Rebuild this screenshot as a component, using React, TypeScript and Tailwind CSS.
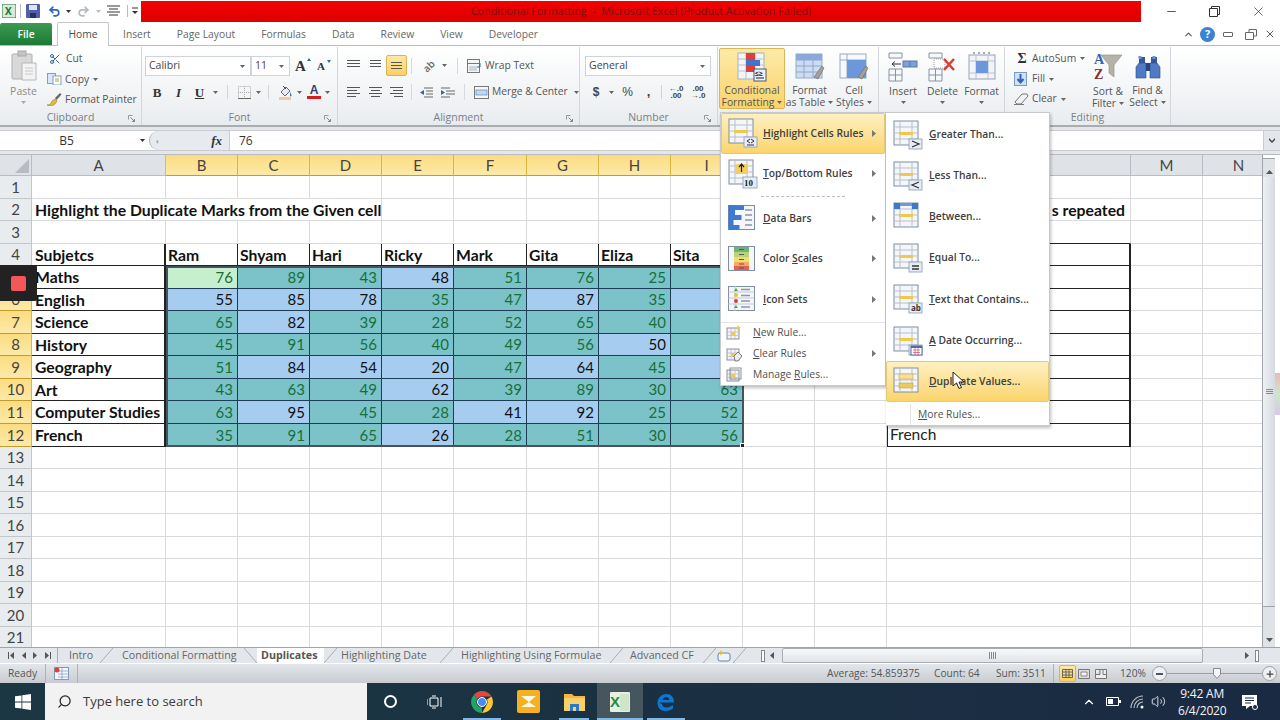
import { ReactNode } from "react"
import { Scissors, Undo2, Redo2, ChevronUp, Volume2, Search, Minus, Plus, X } from "lucide-react"

const uiFont = "font-['Open_Sans',sans-serif]"
const cellFont = "font-['Lato',sans-serif]"

const columns = ["A", "B", "C", "D", "E", "F", "G", "H", "I", "", "", "", "M", "N"]
const names = ["Ram", "Shyam", "Hari", "Ricky", "Mark", "Gita", "Eliza", "Sita"]

// t = duplicate (teal), b = unique (blue), g = active cell
const marks: { subject: string; values: (number | null)[]; fills: string }[] = [
  { subject: "Maths", values: [76, 89, 43, 48, 51, 76, 25, null], fills: "gttbtttt" },
  { subject: "English", values: [55, 85, 78, 35, 47, 87, 35, null], fills: "bbbttbtb" },
  { subject: "Science", values: [65, 82, 39, 28, 52, 65, 40, null], fills: "tbtttttt" },
  { subject: "History", values: [45, 91, 56, 40, 49, 56, 50, null], fills: "ttttttbt" },
  { subject: "Geography", values: [51, 84, 54, 20, 47, 64, 45, null], fills: "tbbbtbtb" },
  { subject: "Art", values: [43, 63, 49, 62, 39, 89, 30, 63], fills: "tttbtttt" },
  { subject: "Computer Studies", values: [63, 95, 45, 28, 41, 92, 25, 52], fills: "tbttbbtt" },
  { subject: "French", values: [35, 91, 65, 26, 28, 51, 30, 56], fills: "tttbtttt" },
]

function Caret({ color = "#666" }: { color?: string }) {
  return (
    <svg width="5" height="3" viewBox="0 0 5 3" className="shrink-0">
      <path d="M0 0h5L2.500 3z" fill={color} />
    </svg>
  )
}

function Launcher() {
  return (
    <svg width="7" height="7" viewBox="0 0 7 7" className="absolute right-[6px] top-[5px]">
      <path d="M.5.5h4M.5.5v4" stroke="#999" fill="none" />
      <path d="M2.500 2.500l4 4M6.500 4v2.500H4" stroke="#888" fill="none" />
    </svg>
  )
}

function Lines({ widths, active }: { widths: number[]; active?: "left" | "center" | "right" }) {
  const a = active ?? "left"
  return (
    <svg width="13" height="11" viewBox="0 0 13 11">
      {widths.map((w, i) => (
        <rect key={i} x={a === "left" ? 0 : a === "center" ? (13 - w) / 2 : 13 - w} y={i * 3} width={w} height="1" fill="#555" />
      ))}
    </svg>
  )
}

function Group({ label, width, launcher, children }: { label: string; width: string; launcher?: boolean; children: ReactNode }) {
  return (
    <div className={`${width} h-full flex flex-col border-r border-[#d3d6da] shrink-0`}>
      <div className="flex-1 flex min-h-0">{children}</div>
      <div className="relative h-[15px] text-center text-[10.5px] leading-[15px] text-[#7a7f85]">
        {label}
        {launcher && <Launcher />}
      </div>
    </div>
  )
}

function GridBase({ fill = "#f4f6f9" }: { fill?: string }) {
  return (
    <>
      <rect x="1" y="1" width="24" height="24" fill={fill} stroke="#7f8da0" strokeWidth="1" />
      <path d="M1 7h24M1 13h24M1 19h24M7 1v24M19 1v24" stroke="#b6c1cf" strokeWidth="1" />
    </>
  )
}

function Badge({ children }: { children: ReactNode }) {
  return (
    <>
      <rect x="16" y="19" width="13" height="10" fill="#e6edf7" stroke="#8a99ad" strokeWidth=".8" />
      {children}
    </>
  )
}

function RuleIcon({ kind }: { kind: string }) {
  return (
    <svg width="30" height="30" viewBox="0 0 30 30" className="shrink-0">
      <GridBase />
      {kind === "between" && <path d="M1 1h6v6H1zM19 1h6v6h-6z" fill="#3f78c8" />}
      {kind === "between" && <rect x="7" y="1" width="12" height="3" fill="#6f9ad8" />}
      {kind === "dup" ? (
        <>
          <rect x="6" y="7" width="14" height="5" fill="#f7e09a" stroke="#b99b3d" strokeWidth=".5" />
          <rect x="6" y="16" width="14" height="5" fill="#eeca5d" stroke="#b99b3d" strokeWidth=".5" />
        </>
      ) : (
        <rect x="6" y="12" width="14" height="3" fill="#efc94f" />
      )}
      {kind === "gt" && <Badge><path d="M19 21l7 3-7 3" fill="none" stroke="#333" strokeWidth="1.300" /></Badge>}
      {kind === "lt" && <Badge><path d="M26 21l-7 3 7 3" fill="none" stroke="#333" strokeWidth="1.300" /></Badge>}
      {kind === "eq" && <Badge><path d="M19 23h7M19 26h7" stroke="#333" strokeWidth="1.300" /></Badge>}
      {kind === "ab" && <Badge><text x="18" y="27" fontSize="8" fontWeight="700" fill="#333">ab</text></Badge>}
      {kind === "date" && (
        <Badge>
          <rect x="18" y="20" width="11" height="9" fill="#fff" stroke="#4a6fa8" />
          <rect x="18" y="20" width="11" height="2" fill="#4a6fa8" />
          <path d="M20 24h7M20 26.500h7M22 22v7M25 22v7" stroke="#c35" strokeWidth=".6" />
        </Badge>
      )}
      {kind === "hl" && <Badge><path d="M22 21l-3 2 3 2M23 21l3 2-3 2M19 27h7" fill="none" stroke="#333" /></Badge>}
    </svg>
  )
}

function TopBottomIcon() {
  return (
    <svg width="30" height="30" viewBox="0 0 30 30" className="shrink-0">
      <GridBase />
      <rect x="7" y="5" width="13" height="10" fill="#f0d060" />
      <path d="M13.500 13V5M11 8l2.500-3 2.500 3" stroke="#222" strokeWidth="1.200" fill="none" />
      <rect x="15" y="18" width="14" height="11" fill="#e6edf7" stroke="#8a99ad" strokeWidth=".8" />
      <text x="16" y="27" fontSize="9" fontWeight="700" fontFamily="Liberation Serif" fill="#222">10</text>
    </svg>
  )
}

function DataBarsIcon() {
  return (
    <svg width="28" height="26" viewBox="0 0 28 26" className="shrink-0">
      <rect x=".5" y=".5" width="26" height="24" fill="#f4f6f9" stroke="#7f8da0" />
      <path d="M.5 0v25h11v-5h-6v-5h8v-5H7V5h9V.5z" fill="#3f78d0" />
      <path d="M17 5h7M17 10h7M17 15h7M17 20h7" stroke="#8a97a8" strokeWidth="1.500" />
    </svg>
  )
}

function ColorScalesIcon() {
  return (
    <svg width="28" height="26" viewBox="0 0 28 26" className="shrink-0">
      <rect x=".5" y=".5" width="26" height="24" fill="#f4f6f9" stroke="#7f8da0" />
      <rect x="6" y="1" width="15" height="5" fill="#6fb46f" />
      <rect x="6" y="6" width="15" height="5" fill="#bcd27a" />
      <rect x="6" y="11" width="15" height="5" fill="#f3dc6e" />
      <rect x="6" y="16" width="15" height="4" fill="#f2ab62" />
      <rect x="6" y="20" width="15" height="4" fill="#e85f50" />
      <path d="M11 3.500h5M11 8.500h5M11 13.500h5M11 18h5M11 22h5" stroke="#556" />
    </svg>
  )
}

function IconSetsIcon() {
  return (
    <svg width="28" height="26" viewBox="0 0 28 26" className="shrink-0">
      <rect x=".5" y=".5" width="26" height="24" fill="#f4f6f9" stroke="#7f8da0" />
      <path d="M.5 6h26M.5 12h26M.5 18h26M7 0v25" stroke="#c3ccd8" />
      <path d="M8 2l2 3H6zM8 19l2 3H6z" fill="#4ca64c" />
      <circle cx="8" cy="9" r="2" fill="#e6c030" />
      <circle cx="8" cy="15" r="2" fill="#d84040" />
      <path d="M13 3.500h9M13 9.500h9M13 15h9M13 21h9" stroke="#8a97a8" strokeWidth="1.500" />
    </svg>
  )
}

function SmallTable({ extra }: { extra: string }) {
  return (
    <svg width="16" height="16" viewBox="0 0 16 16" className="shrink-0">
      <rect x="1" y="3" width="12" height="11" fill="#f1f3f6" stroke="#8a8f98" />
      <path d="M1 7h12M1 10.500h12M5 3v11M9 3v11" stroke="#b4bac4" strokeWidth=".7" />
      <rect x="5" y="7" width="4" height="3.500" fill="#ecc95a" />
      {extra === "new" && <path d="M12 0l1 2 2 .5-2 1L12 6l-1-2.500L9 2.500l2-.5z" fill="#f4c93c" />}
      {extra === "clear" && <path d="M8 10l4-4 4 4-4 5H9z" fill="#e9edf2" stroke="#777" />}
      {extra === "manage" && <rect x="4" y="1" width="11" height="11" fill="none" stroke="#8a8f98" />}
    </svg>
  )
}

function MenuArrow() {
  return (
    <svg width="4" height="7" viewBox="0 0 4 7">
      <path d="M0 0l4 3.500L0 7z" fill="#777" />
    </svg>
  )
}

function MenuRow({ icon, children, arrow, active, sub }: { icon: ReactNode; children: ReactNode; arrow?: boolean; active?: boolean; sub?: boolean }) {
  return (
    <div className={`${sub ? "h-[41.2px]" : "h-[41px]"} flex items-center pl-[6px] pr-[8px] text-[10.3px] font-semibold text-[#404040] ${active ? "bg-linear-to-b from-[#fdf0c0] to-[#fbd56b] border border-[#e3c97c] rounded-[2px]" : "border border-transparent"}`}>
      <span className={`${sub ? "w-[36px]" : "w-[35px]"} shrink-0 flex items-center`}>{icon}</span>
      <span className="flex-1 whitespace-nowrap">{children}</span>
      {arrow && <MenuArrow />}
    </div>
  )
}

function SmallMenuRow({ icon, children, arrow }: { icon: ReactNode; children: ReactNode; arrow?: boolean }) {
  return (
    <div className="h-[21px] flex items-center pl-[5px] pr-[9px] text-[10.3px] text-[#505050]">
      <span className="w-[27px] shrink-0">{icon}</span>
      <span className="flex-1 whitespace-nowrap">{children}</span>
      {arrow && <MenuArrow />}
    </div>
  )
}

function CfMenu() {
  return (
    <div className={`absolute left-[720px] top-[112px] flex items-start z-20 ${uiFont}`}>
      <div className="w-[166px] h-[274px] bg-white border border-[#c6c9cd] shadow-[1px_2px_3px_rgba(0,0,0,.25)] flex flex-col">
        <MenuRow active arrow icon={<RuleIcon kind="hl" />}><u>H</u>ighlight Cells Rules</MenuRow>
        <MenuRow arrow icon={<TopBottomIcon />}><u>T</u>op/Bottom Rules</MenuRow>
        <div className="mx-[40px] my-[1.5px] border-t border-dashed border-[#bbb]" />
        <MenuRow arrow icon={<DataBarsIcon />}><u>D</u>ata Bars</MenuRow>
        <MenuRow arrow icon={<ColorScalesIcon />}>Color <u>S</u>cales</MenuRow>
        <MenuRow arrow icon={<IconSetsIcon />}><u>I</u>con Sets</MenuRow>
        <div className="h-[1px] mt-[2px] bg-[#e6e6e6]" />
        <SmallMenuRow icon={<SmallTable extra="new" />}><u>N</u>ew Rule...</SmallMenuRow>
        <SmallMenuRow arrow icon={<SmallTable extra="clear" />}><u>C</u>lear Rules</SmallMenuRow>
        <SmallMenuRow icon={<SmallTable extra="manage" />}>Manage <u>R</u>ules...</SmallMenuRow>
      </div>
      <div className="w-[164px] h-[314px] pt-[1px] bg-white border border-[#c6c9cd] border-l-0 shadow-[1px_2px_3px_rgba(0,0,0,.25)] flex flex-col">
        <MenuRow sub icon={<RuleIcon kind="gt" />}><u>G</u>reater Than...</MenuRow>
        <MenuRow sub icon={<RuleIcon kind="lt" />}><u>L</u>ess Than...</MenuRow>
        <MenuRow sub icon={<RuleIcon kind="between" />}><u>B</u>etween...</MenuRow>
        <MenuRow sub icon={<RuleIcon kind="eq" />}><u>E</u>qual To...</MenuRow>
        <MenuRow sub icon={<RuleIcon kind="ab" />}><u>T</u>ext that Contains...</MenuRow>
        <MenuRow sub icon={<RuleIcon kind="date" />}><u>A</u> Date Occurring...</MenuRow>
        <MenuRow sub active icon={<RuleIcon kind="dup" />}><u>D</u>uplicate Values...</MenuRow>
        <div className="flex-1 flex items-center pl-[24px] pt-[2px] text-[10.3px] text-[#505050]">
          <span className="border-l border-[#e4e4e4] self-stretch mr-[7px]" />
          <span><u>M</u>ore Rules...</span>
        </div>
      </div>
    </div>
  )
}

function TitleBar() {
  return (
    <div className="h-[22px] flex items-center bg-white shrink-0">
      <div className="w-[141px] flex items-center shrink-0">
        <svg width="14" height="14" viewBox="0 0 14 14" className="ml-[2px]">
          <rect width="14" height="14" rx="1" fill="#d8ead8" stroke="#1f7a3a" />
          <text x="3" y="11" fontSize="10" fontWeight="700" fill="#17713a">X</text>
        </svg>
        <span className="ml-[4px] h-[14px] w-px bg-[#bbb]" />
        <svg width="14" height="14" viewBox="0 0 14 14" className="ml-[5px]">
          <rect width="14" height="14" rx="1" fill="#4f5fa8" />
          <rect x="3" y="1" width="8" height="5" fill="#dfe6f3" />
          <rect x="4" y="9" width="6" height="5" fill="#27306a" />
        </svg>
        <Undo2 size={13} strokeWidth={3} className="ml-[8px] text-[#2f63b8]" />
        <span className="ml-[5px]"><Caret color="#333" /></span>
        <Redo2 size={13} strokeWidth={3} className="ml-[6px] text-[#b4bac2]" />
        <span className="ml-[6px]"><Caret color="#bbb" /></span>
        <svg width="13" height="12" viewBox="0 0 13 12" className="ml-[6px]">
          <path d="M0 1h13M2 4h9M0 7h13M2 10h9" stroke="#333" />
        </svg>
        <span className="ml-[7px] h-[12px] w-px bg-[#bbb]" />
        <svg width="6" height="8" viewBox="0 0 6 8" className="ml-[4px]">
          <path d="M0 1h6" stroke="#333" />
          <path d="M0 4h6L3 7z" fill="#333" />
        </svg>
      </div>
      <div className="w-[1000px] h-[21px] mt-[1px] bg-linear-to-b from-[#f40000] to-[#dc0000] flex items-center justify-center text-[10.8px] text-[#7a1010] whitespace-pre">
        {"Conditional Formatting  -  Microsoft Excel (Product Activation Failed)"}
      </div>
      <div className="flex-1 flex items-center text-[#333]">
        <Minus size={13} strokeWidth={1.500} className="ml-[24px]" />
        <svg width="11" height="11" viewBox="0 0 11 11" className="ml-[31px]">
          <path d="M2.500 2.500V.5h8v8h-2M.5 2.500h8v8h-8z" fill="none" stroke="#333" />
        </svg>
        <X size={15} strokeWidth={1.200} className="ml-[31px]" />
      </div>
    </div>
  )
}

function TabRow() {
  const tabs = ["Insert", "Page Layout", "Formulas", "Data", "Review", "View", "Developer"]
  return (
    <div className="h-[24px] flex items-end bg-white border-b border-[#b9bcc0] shrink-0 text-[10.3px] relative">
      <div className="w-[52px] h-[22px] pt-[1px] bg-linear-to-b from-[#3c9a52] to-[#1d7a35] rounded-t-[2px] flex items-center justify-center text-white font-semibold">File</div>
      <div className="ml-[5px] w-[52px] h-[24px] pt-[1px] -mb-px bg-white border border-b-0 border-[#c3c6ca] rounded-t-[2px] flex items-center justify-center text-[#4d4d4d] z-10">Home</div>
      <div className="ml-[14px] h-[22px] pt-[2px] flex items-center gap-[26px] text-[#666]">
        {tabs.map((t) => <span key={t}>{t}</span>)}
      </div>
      <div className="ml-auto h-[22px] flex items-center text-[#555] pr-[4px]">
        <ChevronUp size={11} strokeWidth={2.500} />
        <span className="ml-[6px] w-[15px] h-[15px] rounded-full bg-[#3b82d0] text-white text-[11px] font-bold flex items-center justify-center">?</span>
        <span className="ml-[8px] w-[10px] h-[5px] border border-[#666] rounded-[1px]" />
        <svg width="12" height="11" viewBox="0 0 12 11" className="ml-[12px]">
          <path d="M4 3V.5h7.500V7H9M.5 3.500H8.500V10.500H.5z" fill="none" stroke="#666" />
        </svg>
        <X size={12} className="ml-[7px]" />
      </div>
    </div>
  )
}

function SmallBtn({ className, children }: { className?: string; children: ReactNode }) {
  return <span className={`h-[20px] flex items-center justify-center shrink-0 ${className ?? ""}`}>{children}</span>
}

function LargeBtn({ icon, lines, width, active }: { icon: ReactNode; lines: [string, string?]; width: string; active?: boolean }) {
  return (
    <div className={`${width} h-[61px] mt-[1px] flex flex-col items-center shrink-0 rounded-[2px] leading-[12px] text-[10.3px] text-[#555] ${active ? "bg-linear-to-b from-[#fdeaa8] to-[#fbd36a] border border-[#dcb654]" : "border border-transparent"}`}>
      <div className="h-[33px] mt-[2px] flex items-center">{icon}</div>
      <div className="mt-[2px] whitespace-nowrap">{lines[0]}</div>
      <div className="flex items-center gap-[3px] whitespace-nowrap h-[12px]">
        {lines[1]}
        <Caret />
      </div>
    </div>
  )
}

function Clipboard() {
  return (
    <div className="flex">
      <div className="w-[47px] flex flex-col items-center pt-[3px] text-[10.5px] text-[#8c8c8c]">
        <svg width="26" height="31" viewBox="0 0 26 31">
          <rect x="1" y="4" width="20" height="25" rx="1" fill="#d8d8d8" stroke="#b0b0b0" />
          <rect x="7" y="1" width="8" height="5" fill="#c4c4c4" stroke="#a8a8a8" />
          <path d="M11 13h14v17H11z" fill="#f3f3f3" stroke="#b8b8b8" />
          <path d="M14 18h8M14 21h8M14 24h8" stroke="#c8c8c8" />
        </svg>
        <span className="mt-[4px] leading-[13px]">Paste</span>
        <span className="mt-[3px]"><Caret color="#aaa" /></span>
      </div>
      <div className="flex flex-col pt-[1px] text-[10.3px] text-[#555] leading-[21px]">
        <div className="h-[21px] flex items-center">
          <Scissors size={12} className="text-[#3465a4] w-[16px]" />
          <span className="ml-[3px]">Cut</span>
        </div>
        <div className="h-[20px] flex items-center">
          <svg width="15" height="12" viewBox="0 0 15 12">
            <rect x=".5" y=".5" width="8" height="10" fill="#dbe7f6" stroke="#7da0c8" />
            <rect x="6" y="3" width="8" height="9" fill="#fff" stroke="#7da0c8" />
            <path d="M8 6h4M8 8h4" stroke="#c19a3a" />
          </svg>
          <span className="ml-[3px]">Copy</span>
          <span className="ml-[4px]"><Caret /></span>
        </div>
        <div className="h-[20px] flex items-center -ml-[1px]">
          <svg width="16" height="14" viewBox="0 0 16 14">
            <path d="M9 6l5-5 1.500 1.500L10.500 8z" fill="#666" />
            <path d="M1 13c3 0 4-1 5-4l3-2 2 2-2 3c-2 2-5 2-8 1z" fill="#e3bc3d" stroke="#9a7c20" strokeWidth=".6" />
          </svg>
          <span className="ml-[3px] whitespace-nowrap">Format Painter</span>
        </div>
      </div>
    </div>
  )
}

function Combo({ value, width }: { value: string; width: string }) {
  return (
    <div className={`${width} h-[20px] bg-white border border-[#d0d3d7] flex items-center justify-between pl-[3px] pr-[5px] text-[10.5px] text-[#444]`}>
      <span>{value}</span>
      <Caret />
    </div>
  )
}

function FontGroup() {
  return (
    <div className="flex flex-col pl-[3px] pt-[9px] w-full">
      <div className="flex items-center h-[20px]">
        <Combo value="Calibri" width="w-[106px]" />
        <Combo value="11" width="w-[39px]" />
        <span className="ml-[5px] w-[14px] relative font-['Liberation_Serif',serif] font-bold text-[15px] text-[#333] leading-none">A<span className="absolute -top-[1px] -right-[2px] w-0 h-0 border-x-[2px] border-b-[3px] border-x-transparent border-b-[#2f63b8]" /></span>
        <span className="ml-[8px] w-[12px] relative font-['Liberation_Serif',serif] font-bold text-[11px] text-[#333] leading-none">A<span className="absolute -top-[1px] -right-[2px] w-0 h-0 border-x-[2px] border-t-[3px] border-x-transparent border-t-[#2f63b8]" /></span>
      </div>
      <div className="flex items-center h-[20px] mt-[6px] font-['Liberation_Serif',serif] text-[13px] text-[#333] leading-none">
        <SmallBtn className="w-[22px] ml-[1px] font-bold">B</SmallBtn>
        <SmallBtn className="w-[21px] italic font-bold">I</SmallBtn>
        <SmallBtn className="w-[21px] font-bold underline">U</SmallBtn>
        <SmallBtn className="w-[10px]"><Caret /></SmallBtn>
        <span className="ml-[7px] w-px h-[14px] bg-[#d0d3d7]" />
        <SmallBtn className="w-[22px] ml-[5px]">
          <svg width="13" height="13" viewBox="0 0 13 13">
            <rect x=".5" y=".5" width="12" height="12" fill="none" stroke="#aaa" strokeDasharray="1 1" />
            <path d="M6.500 0v13M0 6.500h13" stroke="#aaa" strokeDasharray="1 1" />
            <path d="M0 12.500h13" stroke="#666" />
          </svg>
        </SmallBtn>
        <SmallBtn className="w-[7px]"><Caret /></SmallBtn>
        <span className="ml-[6px] w-px h-[14px] bg-[#d0d3d7]" />
        <SmallBtn className="w-[22px] ml-[5px]">
          <svg width="15" height="15" viewBox="0 0 15 15">
            <path d="M3 7l5-5 4 4-5 5z" fill="#e8edf3" stroke="#667" />
            <path d="M5 1l3 3" stroke="#446" />
            <path d="M12 7c1 2 2 3 1.500 4s-2 0-1.500-1z" fill="#3d78c8" />
            <rect x="1" y="12" width="12" height="3" fill="#f3c9a0" />
          </svg>
        </SmallBtn>
        <SmallBtn className="w-[6px]"><Caret /></SmallBtn>
        <SmallBtn className="w-[16px] ml-[4px] flex-col font-['Liberation_Sans',sans-serif] font-bold text-[#333] text-[12px]">
          <span className="leading-[11px] text-[#2b3f78]">A</span>
          <span className="w-[14px] h-[3px] bg-[#d81b1b]" />
        </SmallBtn>
        <SmallBtn className="w-[9px] ml-[1px]"><Caret /></SmallBtn>
      </div>
    </div>
  )
}

function AlignmentGroup() {
  return (
    <div className="flex flex-col pt-[8px] pl-[5px] text-[10.3px] text-[#555] w-full">
      <div className="flex items-center h-[21px]">
        <SmallBtn className="w-[21px]"><Lines widths={[13, 13, 13]} active="center" /></SmallBtn>
        <SmallBtn className="w-[22px]"><Lines widths={[11, 11, 11]} active="center" /></SmallBtn>
        <SmallBtn className="w-[21px] h-[21px] bg-linear-to-b from-[#fde8a4] to-[#fbcf62] border border-[#d9b356] rounded-[2px] pt-[4px]"><Lines widths={[11, 11, 11]} active="center" /></SmallBtn>
        <span className="ml-[4px] w-px h-[16px] bg-[#d7d9dc]" />
        <SmallBtn className="w-[25px] ml-[4px] text-[#666] -rotate-45 text-[10px] font-semibold">ab</SmallBtn>
        <SmallBtn className="w-[6px]"><Caret /></SmallBtn>
        <span className="ml-[10px] w-px h-[16px] bg-[#d7d9dc]" />
        <SmallBtn className="ml-[9px] gap-[3px] whitespace-nowrap">
          <svg width="15" height="14" viewBox="0 0 15 14">
            <rect x=".5" y=".5" width="12" height="13" fill="#f5f6f8" stroke="#777" />
            <path d="M0 4.500h13" stroke="#777" />
            <rect x="2" y="7" width="8" height="5" fill="#cfd6df" />
            <path d="M13 4v4h-3" stroke="#3465a4" fill="none" />
          </svg>
          <span>Wrap Text</span>
        </SmallBtn>
      </div>
      <div className="flex items-center h-[20px] mt-[6px]">
        <SmallBtn className="w-[21px]"><Lines widths={[13, 10, 13, 9]} active="left" /></SmallBtn>
        <SmallBtn className="w-[22px]"><Lines widths={[13, 9, 13, 9]} active="center" /></SmallBtn>
        <SmallBtn className="w-[21px]"><Lines widths={[13, 10, 13, 9]} active="right" /></SmallBtn>
        <span className="ml-[4px] w-px h-[16px] bg-[#d7d9dc]" />
        <SmallBtn className="w-[19px] ml-[4px]">
          <svg width="14" height="11" viewBox="0 0 14 11"><path d="M5 1h9M7 4h7M7 7h7M5 10h9" stroke="#666" /><path d="M5 3L1 5.500 5 8z" fill="#3465a4" /></svg>
        </SmallBtn>
        <SmallBtn className="w-[22px] ml-[2px]">
          <svg width="14" height="11" viewBox="0 0 14 11"><path d="M0 1h9M5 4h9M5 7h9M0 10h9" stroke="#666" /><path d="M0 3l4 2.500L0 8z" fill="#3465a4" /></svg>
        </SmallBtn>
        <span className="ml-[5px] w-px h-[16px] bg-[#d7d9dc]" />
        <SmallBtn className="ml-[9px] gap-[3px] whitespace-nowrap">
          <svg width="15" height="13" viewBox="0 0 15 13">
            <rect x=".5" y=".5" width="14" height="12" fill="#f5f6f8" stroke="#777" />
            <rect x="2" y="4" width="11" height="5" fill="#c6d8ee" stroke="#4a78b8" strokeWidth=".6" />
          </svg>
          <span>Merge &amp; Center</span>
          <span className="ml-[3px]"><Caret /></span>
        </SmallBtn>
      </div>
    </div>
  )
}

function NumberGroup() {
  return (
    <div className="flex flex-col pl-[5px] pt-[9px] w-full text-[#444]">
      <Combo value="General" width="w-[126px]" />
      <div className="flex items-center h-[20px] mt-[6px] font-['Liberation_Sans',sans-serif]">
        <SmallBtn className="w-[22px] text-[12px] font-bold">$</SmallBtn>
        <SmallBtn className="w-[8px]"><Caret /></SmallBtn>
        <SmallBtn className="w-[25px] text-[12px]">%</SmallBtn>
        <SmallBtn className="w-[17px] text-[13px] font-bold">,</SmallBtn>
        <span className="ml-[4px] w-px h-[14px] bg-[#d0d3d7]" />
        <SmallBtn className="w-[22px] ml-[3px] text-[8px] leading-[7px] font-bold">
          <span className="text-center whitespace-pre">{"←.0\n.00"}</span>
        </SmallBtn>
        <SmallBtn className="w-[22px] text-[8px] leading-[7px] font-bold">
          <span className="text-center whitespace-pre">{".00\n→.0"}</span>
        </SmallBtn>
      </div>
    </div>
  )
}

function CfLarge() {
  return (
    <svg width="30" height="30" viewBox="0 0 30 30">
      <rect x="1" y="1" width="26" height="26" fill="#f3f5f9" stroke="#a8b2c0" />
      <path d="M1 7h26M1 13h26M1 19h26M9 1v26M18 1v26" stroke="#b6c1cf" />
      <rect x="9" y="1" width="9" height="7" fill="#d8413c" />
      <rect x="9" y="8" width="14" height="6" fill="#4673c8" />
      <rect x="9" y="14" width="9" height="6" fill="#d8413c" />
      <rect x="17" y="17" width="12" height="12" fill="#eaf0f8" stroke="#556" />
      <text x="18" y="24" fontSize="7" fontWeight="700" fill="#222">≤≥</text>
      <path d="M19 26h8" stroke="#222" />
    </svg>
  )
}

function TableBrush() {
  return (
    <svg width="30" height="28" viewBox="0 0 30 28">
      <rect x="1" y="1" width="26" height="24" fill="#cddcf2" stroke="#98abc6" />
      <rect x="1" y="1" width="26" height="6" fill="#88a9dc" />
      <path d="M1 7h26M1 13h26M1 19h26M9 1v24M18 1v24" stroke="#8ea8cf" />
      <path d="M19 24l8-11 2 2-6 11z" fill="#a5a097" stroke="#6d685f" strokeWidth=".6" />
    </svg>
  )
}

function StylesBrush() {
  return (
    <svg width="30" height="28" viewBox="0 0 30 28">
      <rect x="1" y="1" width="26" height="24" fill="#f7f9fc" stroke="#98abc6" />
      <path d="M1 7h26M8 1v24" stroke="#98abc6" />
      <rect x="8" y="7" width="19" height="18" fill="#6d97dc" />
      <path d="M19 24l8-11 2 2-6 11z" fill="#a5a097" stroke="#6d685f" strokeWidth=".6" />
    </svg>
  )
}

function InsertIcon() {
  return (
    <svg width="30" height="30" viewBox="0 0 30 30">
      <path d="M1 1h13v5H1zM1 17h13v12H1zM7.500 17v12M1 23h13" fill="#f7f8fa" stroke="#8893a2" />
      <rect x="15" y="9" width="14" height="6" fill="#7fa0d6" stroke="#5878a8" />
      <path d="M22 9v6" stroke="#5878a8" />
      <path d="M13 12H4M7 9.500L4 12l3 2.500" stroke="#333" fill="none" />
    </svg>
  )
}

function DeleteIcon() {
  return (
    <svg width="30" height="30" viewBox="0 0 30 30">
      <path d="M1 1h13v5H1zM1 17h13v12H1zM7.500 17v12M1 23h13" fill="#f7f8fa" stroke="#8893a2" />
      <rect x="6" y="7" width="11" height="9" fill="#fff" stroke="#99a" strokeDasharray="1 1" />
      <path d="M16 7l10 11M26 7L16 18" stroke="#e0392f" strokeWidth="2.500" />
    </svg>
  )
}

function FormatIcon() {
  return (
    <svg width="30" height="30" viewBox="0 0 30 30">
      <rect x="2" y="3" width="26" height="24" fill="#f1f4f8" stroke="#98a3b2" />
      <path d="M2 9h26M2 21h26M9 3v24M21 3v24" stroke="#b9c2cf" />
      <rect x="9" y="9" width="12" height="12" fill="#6d97dc" />
      <path d="M6 1h18" stroke="#556" strokeDasharray="2 3" />
    </svg>
  )
}

function SortIcon() {
  return (
    <svg width="30" height="32" viewBox="0 0 30 32">
      <text x="1" y="13" fontSize="14" fontWeight="700" fontFamily="Liberation Serif" fill="#2f63b8">A</text>
      <text x="1" y="28" fontSize="14" fontWeight="700" fontFamily="Liberation Serif" fill="#8a2a22">Z</text>
      <path d="M8 4h21l-8 10v12l-5-4v-8z" fill="#b5b3a8" stroke="#8f8d82" strokeWidth=".6" />
    </svg>
  )
}

function FindIcon() {
  return (
    <svg width="28" height="26" viewBox="0 0 28 26">
      <path d="M5 3h6v9H5zM17 3h6v9h-6z" fill="#36579a" />
      <path d="M2 13l3-4h7v15H2zM26 13l-3-4h-7v15h10z" fill="#4f7bc4" stroke="#2f4d8a" strokeWidth=".6" />
      <rect x="12" y="9" width="4" height="8" fill="#27447e" />
      <path d="M6 5V2M20 5V2" stroke="#6f93d2" strokeWidth="3" />
    </svg>
  )
}

function EditingGroup() {
  return (
    <div className="flex pl-[8px] text-[10.3px] text-[#555]">
      <div className="flex flex-col pt-[1px] w-[76px]">
        <div className="h-[21px] flex items-center">
          <span className="w-[18px] text-center text-[14px] font-bold text-[#333] font-['Liberation_Serif',serif]">Σ</span>
          <span className="ml-[1px]">AutoSum</span>
          <span className="ml-[4px]"><Caret /></span>
        </div>
        <div className="h-[20px] flex items-center">
          <svg width="14" height="14" viewBox="0 0 14 14" className="ml-[1px]">
            <rect x=".5" y=".5" width="12" height="13" fill="#cfe0f5" stroke="#7b9bc6" />
            <path d="M6.500 2v8M3.500 7l3 3.500 3-3.500" stroke="#2f63b8" strokeWidth="2" fill="none" />
          </svg>
          <span className="ml-[4px]">Fill</span>
          <span className="ml-[4px]"><Caret /></span>
        </div>
        <div className="h-[20px] flex items-center">
          <svg width="15" height="12" viewBox="0 0 15 12" className="ml-[1px]">
            <path d="M1 9l7-8h5l1 2-7 8H3z" fill="#f2f2f4" stroke="#777" />
            <path d="M0 11.500h10" stroke="#777" />
          </svg>
          <span className="ml-[3px]">Clear</span>
          <span className="ml-[4px]"><Caret /></span>
        </div>
      </div>
      <LargeBtn width="w-[38px]" icon={<SortIcon />} lines={["Sort &", "Filter"]} />
      <LargeBtn width="w-[39px] ml-[1px]" icon={<FindIcon />} lines={["Find &", "Select"]} />
    </div>
  )
}

function Ribbon() {
  return (
    <div className="h-[81px] flex bg-linear-to-b from-white to-[#e9ecef] border-b-2 border-[#a9acb0] shrink-0 pt-[1px]">
      <Group label="Clipboard" width="w-[142px]" launcher><Clipboard /></Group>
      <Group label="Font" width="w-[196px]" launcher><FontGroup /></Group>
      <Group label="Alignment" width="w-[242px]" launcher><AlignmentGroup /></Group>
      <Group label="Number" width="w-[138px]" launcher><NumberGroup /></Group>
      <Group label="Styles" width="w-[161px]">
        <div className="flex">
          <LargeBtn active width="w-[66px] ml-[1px]" icon={<CfLarge />} lines={["Conditional", "Formatting"]} />
          <LargeBtn width="w-[47px] ml-[1px]" icon={<TableBrush />} lines={["Format", "as Table"]} />
          <LargeBtn width="w-[40px] ml-[1px]" icon={<StylesBrush />} lines={["Cell", "Styles"]} />
        </div>
      </Group>
      <Group label="Cells" width="w-[126px]">
        <div className="flex pl-[4px]">
          <LargeBtn width="w-[40px]" icon={<InsertIcon />} lines={["Insert", ""]} />
          <LargeBtn width="w-[39px]" icon={<DeleteIcon />} lines={["Delete", ""]} />
          <LargeBtn width="w-[39px]" icon={<FormatIcon />} lines={["Format", ""]} />
        </div>
      </Group>
      <Group label="Editing" width="w-[166px]"><EditingGroup /></Group>
    </div>
  )
}

function FormulaBar() {
  return (
    <div className="shrink-0 pt-[3px] pb-[3px] bg-[#e4e6e9] border-b border-[#b8bbbf]">
      <div className="h-[21px] flex bg-white border-y border-[#c9ccd0] text-[12px] text-[#333]">
        <div className="w-[149px] flex items-center justify-center relative">
          <span className="-ml-[16px]">B5</span>
          <span className="absolute right-[4px]"><Caret color="#333" /></span>
        </div>
        <div className="w-[80px] bg-[#e7eaee] rounded-l-[10px] border-l border-[#aeb3b9] flex items-center justify-end pr-[7px] relative">
          <span className="absolute left-[5px] text-[#a3a8ad] text-[8px]">◖</span>
          <span className="font-['Liberation_Serif',serif] italic font-bold text-[13px]">fx</span>
        </div>
        <div className="flex-1 pl-[9px] flex items-center border-l border-[#c9ccd0]">76</div>
        <div className="w-[17px] flex items-center justify-center bg-[#e3e6ea] border-l border-[#c9ccd0]">
          <svg width="8" height="5" viewBox="0 0 8 5"><path d="M1 0l3 3 3-3v2L4 5 1 2z" fill="#444" /></svg>
        </div>
      </div>
    </div>
  )
}

const colWidths = "grid-cols-[32px_134px_72px_72px_72px_72px_73px_72px_72px_72px_72px_72px_244px_72px_72px]"

function Sheet() {
  const cells: ReactNode[] = []
  // column headers
  cells.push(
    <div key="corner" className="bg-[#dfe3e8] border-r border-b border-[#b9bdc3] flex items-end justify-end pr-[2px] pb-[2px]">
      <svg width="14" height="14" viewBox="0 0 14 14"><path d="M14 0v14H0z" fill="#b8bcc2" /></svg>
    </div>
  )
  columns.forEach((c, i) => {
    const sel = i >= 1 && i <= 8
    cells.push(
      <div key={`col${i}`} className={`flex items-center justify-center text-[15px] text-[#444] border-r border-b ${sel ? "bg-linear-to-b from-[#fbdc80] to-[#fdeaa8] border-[#e0b33c] border-b-[#c79a2c]" : "bg-[#dfe3e8] border-[#b9bdc3]"}`}>{c}</div>
    )
  })

  for (let r = 1; r <= 21; r++) {
    const sel = r >= 5 && r <= 12
    cells.push(
      <div key={`h${r}`} className={`flex items-center justify-center text-[15px] text-[#444] border-r border-b ${sel ? "bg-linear-to-b from-[#fbdc80] to-[#fdeaa8] border-[#e0b33c] border-b-[#c79a2c]" : "bg-[#e9ecef] border-[#c3c7cc]"}`}>{r}</div>
    )
    if (r === 2) {
      cells.push(
        <div key="title" className="col-span-4 flex items-center pl-[3px] font-bold text-[15.75px] text-[#111] whitespace-nowrap border-r border-b border-[#d8dadd]">
          Highlight the Duplicate Marks from the Given cell
        </div>
      )
    }
    columns.forEach((_, ci) => {
      if (r === 2 && ci < 4) return
      const key = `c${ci}-${r}`
      const inTable = r >= 4 && r <= 12
      if (inTable && ci === 0) {
        cells.push(
          <div key={key} className="flex items-center pl-[3px] font-bold text-[15.75px] text-[#111] whitespace-nowrap border-r-2 border-b border-[#222] bg-white">
            {r === 4 ? "Subjetcs" : marks[r - 5].subject}
          </div>
        )
        return
      }
      if (r === 4 && ci >= 1 && ci <= 8) {
        cells.push(
          <div key={key} className="flex items-center pl-[2px] font-bold text-[15.75px] text-[#111] border-r border-b border-[#222] bg-white">{names[ci - 1]}</div>
        )
        return
      }
      if (r >= 5 && r <= 12 && ci >= 1 && ci <= 8) {
        const row = marks[r - 5]
        const f = row.fills[ci - 1]
        const fill = f === "g" ? "bg-[#c6efce] text-[#1f6b36]" : f === "t" ? "bg-[#7cc2c9] text-[#16703a]" : "bg-[#a6cdf0] text-[#111]"
        cells.push(
          <div key={key} className={`flex items-center justify-end pr-[4px] text-[15px] border-r border-b border-[#1d3c55] ${fill}`}>{row.values[ci - 1]}</div>
        )
        return
      }
      if (ci === 11 && inTable) {
        cells.push(
          <div key={key} className="flex items-center pl-[2px] text-[15.5px] text-[#222] border-l border-b border-[#222] border-r-2">{r === 12 ? "French" : ""}</div>
        )
        return
      }
      if (ci === 11 && r === 2) {
        cells.push(
          <div key={key} className="flex items-center justify-end pr-[5px] font-bold text-[15.75px] text-[#111] border-r border-b border-[#d8dadd]">s repeated</div>
        )
        return
      }
      const topLine = ci === 11 && r === 3 ? "border-b-[#222]" : ""
      cells.push(<div key={key} className={`border-r border-b border-[#d8dadd] ${topLine}`} />)
    })
  }

  return (
    <div className="flex-1 flex min-h-0 bg-white relative overflow-hidden">
      <div className={`w-[1262px] overflow-hidden grid ${colWidths} grid-rows-[21px_repeat(21,22.55px)] ${cellFont} content-start`}>
        {cells}
      </div>
      <VerticalScroll />
      <div className="flex-1 bg-white flex flex-col">
        <div className="mt-[218px] h-[42px] bg-linear-to-b from-[#e8b8c0] via-[#cde6c6] to-[#d8c8e8]" />
      </div>
      {/* selection border over B5:I12 */}
      <div className="absolute left-[166px] top-[111px] w-[578px] h-[181px] border-2 border-[#46525c] pointer-events-none">
        <span className="absolute -right-[3px] -bottom-[3px] w-[5px] h-[5px] bg-[#222] border border-white" />
      </div>
    </div>
  )
}

function VerticalScroll() {
  return (
    <div className="w-[13px] flex flex-col bg-[#dfe3e8] border-l border-[#9fa4ab]">
      <div className="h-[22px] flex flex-col items-center justify-between pb-[3px]">
        <span className="w-full h-[4px] bg-white border-b border-[#9fa4ab]" />
        <svg width="7" height="4" viewBox="0 0 7 4"><path d="M3.500 0L7 4H0z" fill="#555" /></svg>
      </div>
      <div className="h-[430px] bg-linear-to-r from-[#eef1f5] to-[#d6dae0] border-b border-[#9fa4ab] flex items-center justify-center">
        <svg width="7" height="6" viewBox="0 0 7 6"><path d="M0 .5h7M0 2.500h7M0 4.500h7" stroke="#888" /></svg>
      </div>
      <div className="flex-1 flex items-end justify-center pb-[5px]">
        <svg width="7" height="4" viewBox="0 0 7 4"><path d="M0 0h7L3.500 4z" fill="#555" /></svg>
      </div>
    </div>
  )
}

function TabSlash({ className, flip }: { className?: string; flip?: boolean }) {
  return (
    <svg width="13" height="15" viewBox="0 0 13 15" className={`shrink-0 ${className ?? ""}`}>
      <path d={flip ? "M0 0l13 15" : "M13 0L0 15"} stroke="#a9adb3" fill="none" />
    </svg>
  )
}

function SheetTabs() {
  return (
    <div className={`h-[16px] shrink-0 flex items-center bg-[#e3e6ea] border-t border-[#9fa4ab] text-[10.7px] text-[#666] ${uiFont}`}>
      <div className="w-[761px] h-full flex items-center overflow-hidden shrink-0">
        <div className="w-[58px] flex items-center justify-around pl-[4px] pr-[2px] border-r border-[#a9adb3] h-full shrink-0">
          <svg width="6" height="7" viewBox="0 0 6 7"><path d="M0 0h1v7H0zM6 0v7L2 3.500z" fill="#555" /></svg>
          <svg width="4" height="7" viewBox="0 0 4 7"><path d="M4 0v7L0 3.500z" fill="#555" /></svg>
          <svg width="4" height="7" viewBox="0 0 4 7"><path d="M0 0v7l4-3.500z" fill="#555" /></svg>
          <svg width="6" height="7" viewBox="0 0 6 7"><path d="M5 0h1v7H5zM0 0v7l4-3.500z" fill="#555" /></svg>
        </div>
        <span className="ml-[11px] w-[25px] whitespace-nowrap shrink-0">Intro</span>
        <TabSlash className="ml-[6px]" />
        <span className="ml-[9px] w-[114px] whitespace-nowrap shrink-0">Conditional Formatting</span>
        <TabSlash className="ml-[8px]" flip />
        <div className="h-[16px] w-[67px] pl-[4px] bg-white flex items-center font-bold text-[#555] whitespace-nowrap shrink-0">Duplicates</div>
        <TabSlash />
        <span className="ml-[4px] w-[87px] whitespace-nowrap shrink-0">Highlighting Date</span>
        <TabSlash className="ml-[12px]" />
        <span className="ml-[8px] w-[139px] whitespace-nowrap shrink-0">Highlighting Using Formulae</span>
        <TabSlash className="ml-[10px]" />
        <span className="ml-[7px] w-[66px] whitespace-nowrap shrink-0">Advanced CF</span>
        <TabSlash className="ml-[7px]" />
        <svg width="14" height="12" viewBox="0 0 14 12" className="ml-[1px] shrink-0">
          <rect x="1" y="3" width="12" height="8" rx="2" fill="#eef3f9" stroke="#6b86a8" />
          <path d="M4 0l1 2 2 .5-2 1L4 6 3 3.500l-2-1 2-.5z" fill="#e9b93a" />
        </svg>
        <TabSlash className="ml-[2px]" />
      </div>
      <span className="w-[4px] h-[12px] bg-white border border-[#888] shrink-0" />
      <svg width="4" height="7" viewBox="0 0 4 7" className="ml-[5px] shrink-0"><path d="M4 0v7L0 3.500z" fill="#555" /></svg>
      <div className="ml-[8px] w-[421px] h-[15px] bg-linear-to-b from-[#f6f7f9] to-[#e2e5e9] border border-[#a9adb3] rounded-[2px] flex items-center justify-center shrink-0">
        <svg width="7" height="7" viewBox="0 0 7 7"><path d="M.5 0v7M2.500 0v7M4.500 0v7M6.500 0v7" stroke="#888" /></svg>
      </div>
      <svg width="4" height="7" viewBox="0 0 4 7" className="ml-[42px] shrink-0"><path d="M0 0v7l4-3.500z" fill="#555" /></svg>
      <span className="ml-[6px] w-[4px] h-[12px] bg-white border border-[#888] shrink-0" />
    </div>
  )
}

function StatusBar() {
  return (
    <div className={`h-[20px] shrink-0 flex items-center bg-linear-to-b from-[#e3e6ea] to-[#c8ccd1] border-t border-[#fff] text-[10.2px] text-[#555] ${uiFont}`}>
      <span className="ml-[8px] w-[37px]">Ready</span>
      <span className="w-px h-full bg-[#aeb2b8]" />
      <svg width="15" height="13" viewBox="0 0 15 13" className="ml-[8px]">
        <rect x=".5" y=".5" width="14" height="12" fill="#f3f6fa" stroke="#7e9ac0" />
        <path d="M4 4h10M4 7h10M4 10h10M8 1v11" stroke="#7e9ac0" strokeWidth=".7" />
        <circle cx="3" cy="3" r="2.500" fill="#d8413c" />
      </svg>
      <span className="ml-[8px] w-px h-full bg-[#aeb2b8]" />
      <span className="ml-[749px] w-[107px] whitespace-nowrap">Average: 54.859375</span>
      <span className="w-[62px] whitespace-nowrap">Count: 64</span>
      <span className="w-[57px] whitespace-nowrap">Sum: 3511</span>
      <span className="w-px h-full bg-[#aeb2b8]" />
      <span className="ml-[5px] w-[17px] h-[17px] bg-linear-to-b from-[#fde8a4] to-[#fbcf62] border border-[#d9b356] rounded-[2px] flex items-center justify-center">
        <svg width="11" height="9" viewBox="0 0 11 9"><path d="M.5.5h10v8H.5zM.5 3h10M.5 6h10M4 .5v8M7 .5v8" stroke="#666" fill="none" /></svg>
      </span>
      <svg width="12" height="10" viewBox="0 0 12 10" className="ml-[2px]"><path d="M.5.5h11v9H.5z" stroke="#777" fill="#ddd" /><path d="M3 3h6v4H3z" stroke="#888" fill="#f4f4f4" /></svg>
      <svg width="12" height="10" viewBox="0 0 12 10" className="ml-[5px]"><path d="M.5 9.500h11v-9h-11zM5 .5v5H.5M8 .5v5h3.500" stroke="#777" fill="#eee" /></svg>
      <span className="ml-[13px] w-[25px] whitespace-nowrap">120%</span>
      <span className="ml-[7px] w-[15px] h-[15px] rounded-full border border-[#9aa0a8] bg-[#eef0f3] flex items-center justify-center">
        <span className="w-[7px] h-[2px] bg-[#555]" />
      </span>
      <div className="w-[95px] flex items-center justify-center relative">
        <span className="w-full h-px bg-[#9aa0a8]" />
        <svg width="8" height="11" viewBox="0 0 8 11" className="absolute left-[46px] top-[-5px]"><path d="M.5.500h7v6L4 10.500.5 6.500z" fill="#f4f5f7" stroke="#888" /></svg>
      </div>
      <span className="w-[15px] h-[15px] rounded-full border border-[#9aa0a8] bg-[#eef0f3] flex items-center justify-center text-[#444]">
        <Plus size={10} strokeWidth={3} />
      </span>
    </div>
  )
}

function TaskIcon({ children, active, underline }: { children: ReactNode; active?: boolean; underline?: string }) {
  return (
    <div className={`w-[46px] h-full flex items-center justify-center relative ${active ? "bg-[#45565f]" : ""}`}>
      {children}
      {underline && <span className={`absolute bottom-0 left-1/2 -translate-x-1/2 h-[2px] bg-[#80b8e8] ${underline}`} />}
    </div>
  )
}

function Taskbar() {
  return (
    <div className={`h-[37px] shrink-0 flex items-center bg-linear-to-r from-[#1b3742] to-[#1a2a42] text-white ${uiFont}`}>
      <div className="w-[45px] flex justify-center">
        <svg width="16" height="16" viewBox="0 0 16 16">
          <path d="M0 2.300l6.500-.9v6.200H0zM7.300 1.300L16 0v7.600H7.300zM0 8.400h6.500v6.200L0 13.700zM7.300 8.400H16V16l-8.700-1.300z" fill="#fff" />
        </svg>
      </div>
      <div className="w-[322px] h-full bg-[#f2f2f2] flex items-center text-[13px] text-[#3c3c3c]">
        <Search size={15} className="ml-[12px] -scale-x-100 text-[#222]" />
        <span className="ml-[11px]">Type here to search</span>
      </div>
      <div className="w-[46px] flex justify-center">
        <span className="w-[13px] h-[13px] rounded-full border-2 border-white" />
      </div>
      <div className="w-[44px] flex justify-center mr-[2px]">
        <svg width="16" height="14" viewBox="0 0 16 14"><path d="M3 3h8v8H3zM0 4v6M14 2v10" fill="none" stroke="#fff" /><path d="M5 1h4M5 13h4" stroke="#fff" /></svg>
      </div>
      <TaskIcon underline="w-[38px]">
        <svg width="22" height="22" viewBox="0 0 22 22">
          <path d="M11 0a11 11 0 0 1 9.500 5.500H11a5.500 5.500 0 0 0-5 3L3.100 3.500A11 11 0 0 1 11 0z" fill="#dd4b3e" />
          <path d="M20.500 5.500A11 11 0 0 1 11 22l4.700-8.200a5.500 5.500 0 0 0 .2-5.300z" fill="#fcc934" />
          <path d="M11 22A11 11 0 0 1 3.100 3.500L6 8.500a5.500 5.500 0 0 0 5 8z" fill="#1fa463" />
          <circle cx="11" cy="11" r="4.500" fill="#4a8af4" stroke="#fff" />
        </svg>
      </TaskIcon>
      <TaskIcon>
        <svg width="23" height="23" viewBox="0 0 23 23">
          <rect width="23" height="23" rx="2" fill="#f6b21e" />
          <path d="M4 6h15l-7 6 7 5H4l8-5z" fill="#fff" opacity=".9" />
        </svg>
      </TaskIcon>
      <TaskIcon underline="w-[30px]">
        <svg width="21" height="18" viewBox="0 0 21 18">
          <path d="M0 1h8l2 2h11v15H0z" fill="#f2b83c" />
          <rect y="5" width="21" height="13" fill="#f7d06c" />
          <rect x="6" y="11" width="9" height="7" fill="#2d7ac4" />
          <rect x="9" y="14" width="3" height="4" fill="#f7d06c" />
        </svg>
      </TaskIcon>
      <TaskIcon active underline="w-[46px]">
        <svg width="20" height="20" viewBox="0 0 20 20">
          <rect width="20" height="20" rx="1" fill="#e6f0e2" />
          <path d="M10 2h9v17h-9z" fill="#cfe4c8" />
          <text x="0" y="15" fontSize="15" fontWeight="700" fontFamily="Liberation Sans" fill="#2a8a42">X</text>
        </svg>
      </TaskIcon>
      <TaskIcon underline="w-[38px]">
        <svg width="20" height="20" viewBox="0 0 20 20">
          <path d="M3 10.500h15C18 5 15 2 10.500 2 5.500 2 1.500 6 1.500 11c0 5 3.500 8 8 8 3 0 5.500-1 7.500-2.500v-3.500c-2 1.500-4 2.500-6.500 2.500-3 0-4.500-1.500-4.500-3.500zM6.500 8c.5-2 2-3 3.800-3s3 1 3 3z" fill="#0a78d6" fillRule="evenodd" />
        </svg>
      </TaskIcon>
      <div className="ml-auto flex items-center pr-[22px]">
        <ChevronUp size={14} strokeWidth={2} />
        <svg width="15" height="9" viewBox="0 0 15 9" className="ml-[10px]"><path d="M.5.500h12v8H.5z" fill="none" stroke="#fff" /><rect x="2" y="2" width="5" height="5" fill="#fff" /><rect x="13" y="3" width="2" height="3" fill="#fff" /></svg>
        <svg width="14" height="14" viewBox="0 0 14 14" className="ml-[9px]">
          <path d="M1 13A12 12 0 0 1 13 1M4 13A9 9 0 0 1 13 4M7 13a6 6 0 0 1 6-6" fill="none" stroke="#bcc4cb" strokeWidth="1.100" />
          <circle cx="12" cy="12" r="1.500" fill="#fff" />
        </svg>
        <Volume2 size={15} strokeWidth={1.500} className="ml-[7px] text-[#e4e8ec]" />
        <div className="ml-[12px] w-[46px] text-[12px] leading-[17px] text-right text-[#f4f5f6] tracking-[-.2px]">
          <div className="whitespace-nowrap">9:42 AM</div>
          <div className="whitespace-nowrap">6/4/2020</div>
        </div>
        <svg width="16" height="16" viewBox="0 0 16 16" className="ml-[18px]">
          <path d="M0 1h15v11H8l-4 3v-3H0z" fill="#fff" />
          <path d="M3 4h9M3 6.500h9M3 9h6" stroke="#1a2a42" />
          <circle cx="13" cy="13" r="2.500" fill="#1a2a42" stroke="#fff" />
        </svg>
      </div>
    </div>
  )
}

export default function App() {
  return (
    <div className={`relative w-[1280px] h-[720px] overflow-hidden flex flex-col bg-white ${uiFont}`}>
      <TitleBar />
      <TabRow />
      <Ribbon />
      <FormulaBar />
      <Sheet />
      <SheetTabs />
      <StatusBar />
      <Taskbar />
      <CfMenu />
      {/* screen recorder stop button */}
      <div className="absolute left-0 top-[265px] w-[37px] h-[36px] bg-[#222] rounded-r-[2px] flex items-center justify-center z-10">
        <span className="w-[15px] h-[15px] rounded-[2px] bg-[#f4565a]" />
      </div>
      {/* mouse pointer */}
      <svg width="13" height="19" viewBox="0 0 13 19" className="absolute left-[952px] top-[371px] z-30">
        <path d="M1 1v14l3.500-3 2.500 5.500 2.500-1L7 11h5z" fill="#fff" stroke="#222" />
      </svg>
    </div>
  )
}
